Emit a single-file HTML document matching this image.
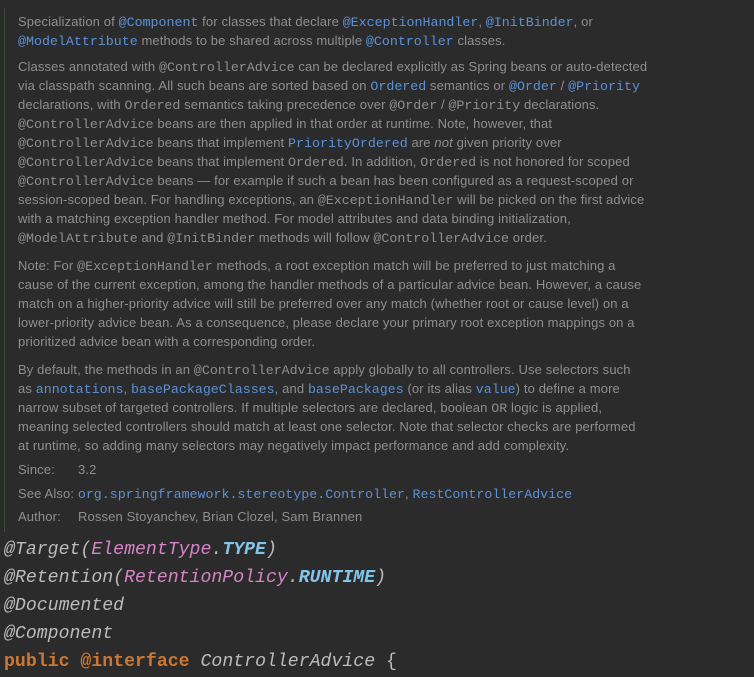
<!DOCTYPE html><html><head><style>
body{margin:0;background:#2b2b2b;width:754px;height:677px;overflow:hidden;position:relative}
.doc{position:absolute;left:4px;top:8px;width:1px;height:524px;background:#3d4a3a}
.l{position:absolute;left:18px;white-space:nowrap;font:13px "Liberation Sans",sans-serif;color:#8f8f8f;letter-spacing:0.13px;top:0}
.l code,.l b{font:13.3px "Liberation Mono",monospace;font-weight:normal;letter-spacing:0}
.l b{color:#5b91d8}
.c{position:absolute;left:4px;white-space:nowrap;font:italic 18.2px "Liberation Mono",monospace;color:#bbb}
.o{color:#cc7832;font-style:normal;font-weight:bold}
.p{color:#d584c8}.t{color:#83c5ea;font-weight:bold}
</style></head><body>
<div class="doc"></div>
<div class="l" style="top:14px">Specialization of <b>@Component</b> for classes that declare <b>@ExceptionHandler</b>, <b>@InitBinder</b>, or</div>
<div class="l" style="top:33px"><b>@ModelAttribute</b> methods to be shared across multiple <b>@Controller</b> classes.</div>
<div class="l" style="top:59px">Classes annotated with <code>@ControllerAdvice</code> can be declared explicitly as Spring beans or auto-detected</div>
<div class="l" style="top:78px">via classpath scanning. All such beans are sorted based on <b>Ordered</b> semantics or <b>@Order</b> / <b>@Priority</b></div>
<div class="l" style="top:97px">declarations, with <code>Ordered</code> semantics taking precedence over <code>@Order</code> / <code>@Priority</code> declarations.</div>
<div class="l" style="top:116px"><code>@ControllerAdvice</code> beans are then applied in that order at runtime. Note, however, that</div>
<div class="l" style="top:135px"><code>@ControllerAdvice</code> beans that implement <b>PriorityOrdered</b> are <i>not</i> given priority over</div>
<div class="l" style="top:154px"><code>@ControllerAdvice</code> beans that implement <code>Ordered</code>. In addition, <code>Ordered</code> is not honored for scoped</div>
<div class="l" style="top:173px"><code>@ControllerAdvice</code> beans — for example if such a bean has been configured as a request-scoped or</div>
<div class="l" style="top:192px">session-scoped bean. For handling exceptions, an <code>@ExceptionHandler</code> will be picked on the first advice</div>
<div class="l" style="top:211px">with a matching exception handler method. For model attributes and data binding initialization,</div>
<div class="l" style="top:230px"><code>@ModelAttribute</code> and <code>@InitBinder</code> methods will follow <code>@ControllerAdvice</code> order.</div>
<div class="l" style="top:258px">Note: For <code>@ExceptionHandler</code> methods, a root exception match will be preferred to just matching a</div>
<div class="l" style="top:277px">cause of the current exception, among the handler methods of a particular advice bean. However, a cause</div>
<div class="l" style="top:296px">match on a higher-priority advice will still be preferred over any match (whether root or cause level) on a</div>
<div class="l" style="top:315px">lower-priority advice bean. As a consequence, please declare your primary root exception mappings on a</div>
<div class="l" style="top:334px">prioritized advice bean with a corresponding order.</div>
<div class="l" style="top:362px">By default, the methods in an <code>@ControllerAdvice</code> apply globally to all controllers. Use selectors such</div>
<div class="l" style="top:381px">as <b>annotations</b>, <b>basePackageClasses</b>, and <b>basePackages</b> (or its alias <b>value</b>) to define a more</div>
<div class="l" style="top:400px">narrow subset of targeted controllers. If multiple selectors are declared, boolean <code>OR</code> logic is applied,</div>
<div class="l" style="top:419px">meaning selected controllers should match at least one selector. Note that selector checks are performed</div>
<div class="l" style="top:438px">at runtime, so adding many selectors may negatively impact performance and add complexity.</div>
<div class="l" style="top:462px">Since:<span style="position:absolute;left:60px">3.2</span></div>
<div class="l" style="top:486px">See Also: <b>org.springframework.stereotype.Controller</b>, <b>RestControllerAdvice</b></div>
<div class="l" style="top:509px">Author:<span style="position:absolute;left:60px">Rossen Stoyanchev, Brian Clozel, Sam Brannen</span></div>
<div class="c" style="top:540px">@Target(<span class="p">ElementType</span>.<span class="t">TYPE</span>)</div>
<div class="c" style="top:568px">@Retention(<span class="p">RetentionPolicy</span>.<span class="t">RUNTIME</span>)</div>
<div class="c" style="top:596px">@Documented</div>
<div class="c" style="top:624px">@Component</div>
<div class="c" style="top:652px"><span class="o">public</span> <span class="o">@interface</span> ControllerAdvice <span style="font-style:normal">{</span></div>
</body></html>
